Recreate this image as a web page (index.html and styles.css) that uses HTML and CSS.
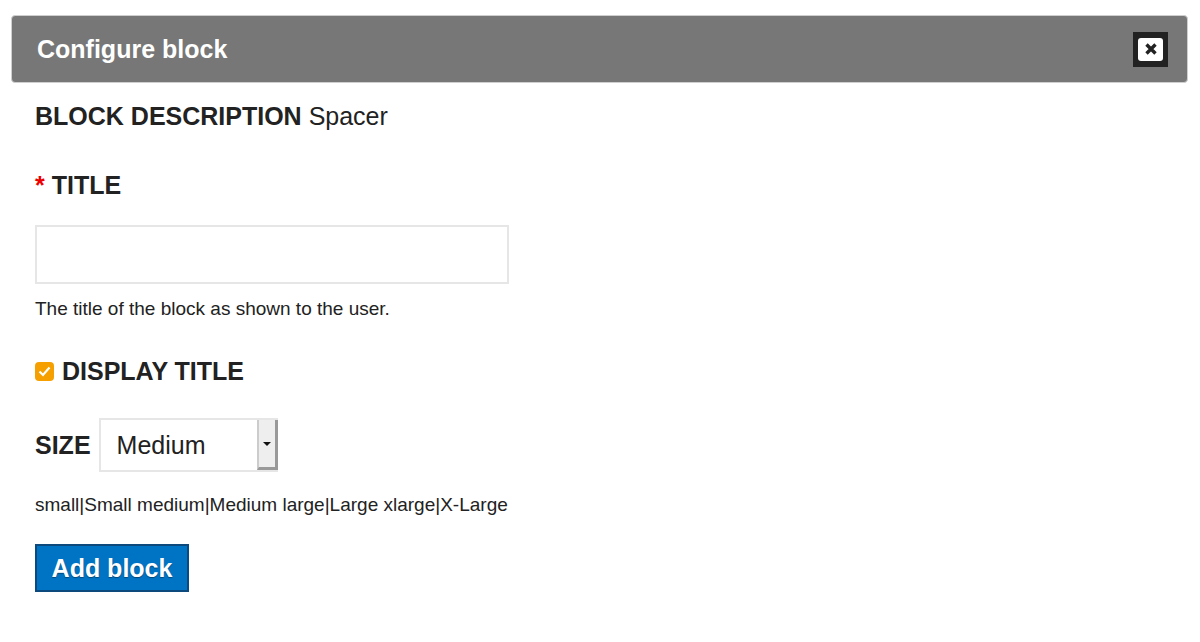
FILE: index.html
```html
<!DOCTYPE html>
<html lang="en">
<head>
    <meta charset="UTF-8">
    <meta name="viewport" content="width=device-width, initial-scale=1.0">
    <title>Configure block</title>
    <link rel="stylesheet" href="styles.css">
</head>
<body>
    <div class="dialog">
        <div class="dialog-titlebar">
            <span class="dialog-title">Configure block</span>
            <button class="dialog-close" title="Close">
                <span class="close-inner">
                    <svg width="14" height="14" viewBox="0 0 14 14">
                        <path d="M2.5 2.5 L11.5 11.5 M11.5 2.5 L2.5 11.5" stroke="#222" stroke-width="3.4" stroke-linecap="butt"/>
                    </svg>
                </span>
            </button>
        </div>

        <form class="dialog-content">
            <div class="form-item">
                <span class="label">Block description</span> Spacer
            </div>

            <div class="form-item item-title">
                <label class="label label-block" for="edit-title"><span class="required">*</span> Title</label>
                <input type="text" id="edit-title" class="form-text">
                <div class="description">The title of the block as shown to the user.</div>
            </div>

            <div class="form-item form-checkbox">
                <span class="checkbox">
                    <svg width="13" height="11" viewBox="0 0 13 11">
                        <path d="M1.5 5.5 L5 9 L11.5 1.5" fill="none" stroke="#fff" stroke-width="2.2"/>
                    </svg>
                </span>
                <label class="label">Display title</label>
            </div>

            <div class="form-item item-size">
                <div class="select-row">
                    <label class="label" for="edit-size">Size</label>
                    <div class="select">
                        <span class="select-value">Medium</span>
                        <span class="select-arrow"></span>
                    </div>
                </div>
                <div class="description">small|Small medium|Medium large|Large xlarge|X-Large</div>
            </div>

            <button type="button" class="button-primary">Add block</button>
        </form>
    </div>
</body>
</html>
```

FILE: styles.css
```css
* {
    margin: 0;
    padding: 0;
    box-sizing: border-box;
}

body {
    background-color: #fff;
    font-family: "Liberation Sans", Arial, Helvetica, sans-serif;
    color: #222;
}

.dialog {
    padding: 15px 12px 0 11px;
}

.dialog-titlebar {
    height: 68px;
    background-color: #777;
    border: 1px solid #cfcfcf;
    border-radius: 4px;
    display: flex;
    align-items: center;
    justify-content: space-between;
    padding: 0 19px 0 25px;
}

.dialog-title {
    color: #fff;
    font-size: 25px;
    font-weight: bold;
}

.dialog-close {
    width: 35px;
    height: 35px;
    background-color: #222;
    border: none;
    display: flex;
    align-items: center;
    justify-content: center;
    cursor: pointer;
}

.close-inner {
    width: 25px;
    height: 23px;
    background-color: #fff;
    border-radius: 3px;
    display: flex;
    align-items: center;
    justify-content: center;
}

.dialog-content {
    padding: 19px 24px;
}

.form-item {
    font-size: 25px;
    margin-bottom: 40px;
}

.item-title {
    margin-bottom: 37px;
}

.item-size {
    margin-bottom: 28px;
}

.label {
    font-weight: bold;
    text-transform: uppercase;
}

.label-block {
    display: block;
    margin-bottom: 25px;
}

.required {
    color: #e00;
}

.form-text {
    display: block;
    width: 474px;
    height: 59px;
    border: 2px solid #e6e6e6;
    background: #fff;
    font-size: 20px;
}

.description {
    font-size: 19px;
    margin-top: 14px;
    color: #222;
}

.item-size .description {
    margin-top: 22px;
}

.form-checkbox {
    display: flex;
    align-items: center;
    gap: 8px;
    margin-bottom: 32px;
}

.checkbox {
    width: 19px;
    height: 19px;
    border-radius: 4px;
    background-color: #f5a000;
    display: flex;
    align-items: center;
    justify-content: center;
}

.select-row {
    display: flex;
    align-items: center;
    gap: 8px;
}

.select {
    width: 179px;
    height: 54px;
    border: 2px solid #e6e6e6;
    border-right: none;
    display: flex;
    align-items: stretch;
}

.select-value {
    flex: 1;
    display: flex;
    align-items: center;
    padding-left: 16px;
    font-size: 25px;
}

.select-arrow {
    width: 21px;
    background-color: #eee;
    border-left: 2px solid #ccc;
    border-right: 3px solid #999;
    border-bottom: 3px solid #999;
    display: flex;
    align-items: center;
    justify-content: center;
}

.select-arrow::after {
    content: "";
    border-left: 4px solid transparent;
    border-right: 4px solid transparent;
    border-top: 4px solid #111;
}

.button-primary {
    width: 154px;
    height: 48px;
    background-color: #0074c4;
    border: 2px solid #0c4a7d;
    color: #fff;
    font-family: inherit;
    font-size: 25px;
    font-weight: bold;
    text-shadow: 0 1px 1px rgba(0, 0, 0, 0.4);
    cursor: pointer;
}
```
